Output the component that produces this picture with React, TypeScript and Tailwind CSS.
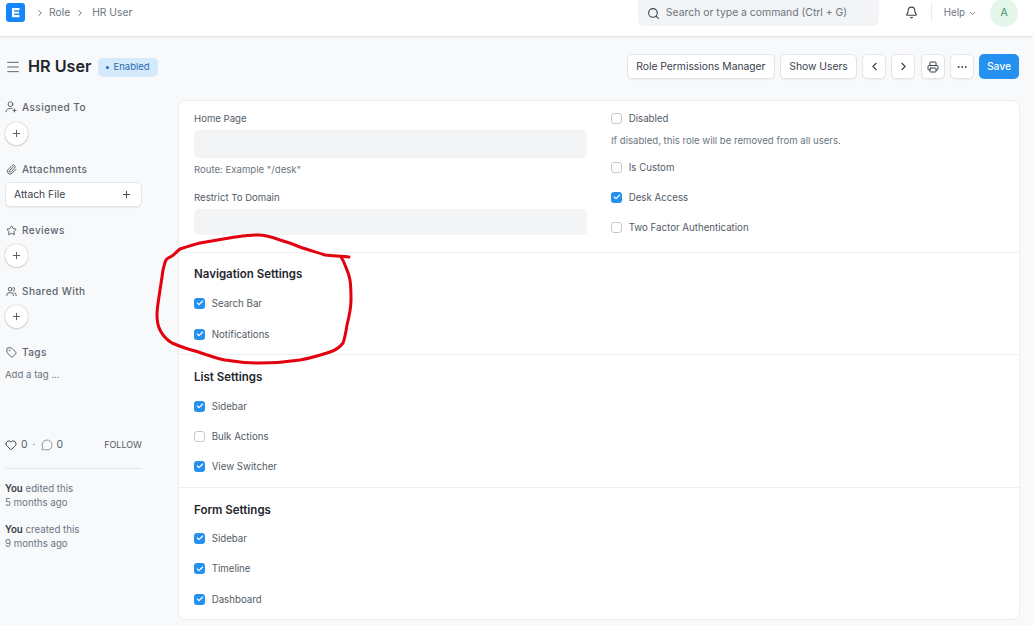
import React from "react";
import { Search, Bell, ChevronDown, ChevronLeft, ChevronRight, Printer, Ellipsis, Menu, Plus, Paperclip, Star, Users, Tag, Heart, MessageCircle, Check } from "lucide-react";

function Cb({ label, on }: { label: string; on?: boolean }) {
  return (
    <div className="flex items-center h-[14px] gap-[6.7px] text-[9.7px] text-[#525b66]">
      {on ? (
        <span className="w-[11px] h-[11px] -translate-y-px rounded-[3px] bg-[#2490ef] flex items-center justify-center">
          <Check size={8} color="#fff" strokeWidth={3.5} />
        </span>
      ) : (
        <span className="w-[11px] h-[11px] -translate-y-px rounded-[3px] border border-[#c4c9cf] bg-white" />
      )}
      <span>{label}</span>
    </div>
  );
}

function SideHead({ icon, label }: { icon: React.ReactNode; label: string }) {
  return (
    <div className="flex items-center h-[14px] gap-[5px] text-[10px] tracking-[0.45px] text-[#5c6570] font-medium">
      <span className="w-[12px] flex justify-center text-[#4c5560]">{icon}</span>
      {label}
    </div>
  );
}

function Round() {
  return (
    <div className="w-[23px] h-[23px] rounded-full bg-white shadow-[0_0_1px_rgba(0,0,0,.35),0_1px_2px_rgba(0,0,0,.15)] flex items-center justify-center text-[#4c5560]">
      <Plus size={11} />
    </div>
  );
}

function Btn({ children, w }: { children: React.ReactNode; w?: string }) {
  return (
    <div className={`h-[25px] rounded-[5px] bg-white border border-[#e3e6e9] shadow-[0_1px_1px_rgba(0,0,0,.05)] flex items-center justify-center text-[10.3px] text-[#39414b] ${w ?? ""}`}>
      {children}
    </div>
  );
}

function AssignIcon() {
  return (
    <svg width="12" height="12" viewBox="0 0 12 12" fill="none" stroke="currentColor" strokeWidth="0.9" strokeLinecap="round">
      <circle cx="5.5" cy="3.2" r="2.4" />
      <path d="M1 10.8C1 8.6 2.8 7.4 5.5 7.4C6.2 7.4 6.8 7.5 7.3 7.6" />
      <path d="M9.5 8V11M8 9.5H11" />
    </svg>
  );
}

export default function App() {
  return (
    <div className="relative w-[1033px] h-[625px] overflow-hidden bg-[#f8f9fa] font-['Inter',sans-serif]">
      <header className="h-[36px] bg-white shadow-[0_1px_2px_rgba(0,0,0,.12)] flex items-start pl-[6px] pr-[15px]">
        <div className="mt-[3px] w-[19px] h-[19px] rounded-[3px] bg-[#1587fa]">
          <svg width="19" height="19" viewBox="0 0 19 19" fill="#fff">
            <rect x="6" y="5" width="7.5" height="2.2" />
            <rect x="6" y="5" width="2.2" height="9" />
            <rect x="6" y="8.6" width="7" height="2" />
            <rect x="6" y="12" width="7.5" height="2.2" />
          </svg>
        </div>
        <div className="flex items-center h-[25px] ml-[10px] text-[10.3px] text-[#6b7480] whitespace-nowrap">
          <ChevronRight size={10} className="text-[#4c5560]" />
          <span className="ml-[4px]">Role</span>
          <ChevronRight size={10} className="ml-[5px] text-[#4c5560]" />
          <span className="ml-[7px]">HR User</span>
        </div>
        <div className="ml-auto w-[241px] h-[26px] rounded-b-[5px] bg-[#f3f4f6] flex items-center pl-[9px] gap-[6px] text-[10.4px] text-[#6b7480] whitespace-nowrap">
          <Search size={13} className="text-[#39414b]" />
          <span>Search or type a command (Ctrl + G)</span>
        </div>
        <div className="flex items-center h-[25px] ml-[26px]">
          <Bell size={13} className="text-[#39414b]" />
          <div className="w-px h-[19px] bg-[#e8eaed] ml-[13px]" />
          <span className="ml-[12px] mt-[1px] text-[9.7px] text-[#6b7480]">Help</span>
          <ChevronDown size={9} className="ml-[3px] mt-[1px] text-[#4c5560]" />
          <div className="ml-[13px] w-[28px] h-[28px] rounded-full bg-[#e4f5e9] flex items-center justify-center text-[10.5px] text-[#3c9a5f]">A</div>
        </div>
      </header>

      <div className="flex items-center h-[25px] mt-[18px] pl-[5px] pr-[14px]">
        <Menu size={16} strokeWidth={1.5} className="text-[#5c6570]" />
        <h1 className="ml-[7px] text-[16.2px] leading-none font-semibold text-[#1f272e] whitespace-nowrap">HR User</h1>
        <div className="ml-[6px] mt-[2px] h-[19px] px-[8px] rounded-[5px] bg-[#d3e9fc] flex items-center gap-[5px] text-[9.5px] text-[#2b6cb0]">
          <span className="w-[3px] h-[3px] rounded-full bg-[#2b6cb0]" />
          Enabled
        </div>
        <div className="ml-auto flex items-center gap-[5.2px]">
          <Btn w="w-[148px]">Role Permissions Manager</Btn>
          <Btn w="w-[77px]">Show Users</Btn>
          <Btn w="w-[24px]"><ChevronLeft size={13} /></Btn>
          <Btn w="w-[24px]"><ChevronRight size={13} /></Btn>
          <Btn w="w-[24px]"><Printer size={12} /></Btn>
          <Btn w="w-[24px]"><Ellipsis size={12} /></Btn>
          <div className="h-[25px] w-[40px] rounded-[5px] bg-[#2490ef] flex items-center justify-center text-[10.3px] font-medium text-white">Save</div>
        </div>
      </div>

      <div className="flex mt-[21px]">
        <aside className="w-[178px] shrink-0 pl-[5px] pr-[36px]">
          <SideHead icon={<AssignIcon />} label="Assigned To" />
          <div className="mt-[8px]"><Round /></div>
          <div className="mt-[17px]"><SideHead icon={<Paperclip size={11} />} label="Attachments" /></div>
          <div className="mt-[6px] h-[25px] rounded-[5px] bg-white border border-[#e3e6e9] shadow-[0_1px_1px_rgba(0,0,0,.06)] flex items-center justify-between pl-[8px] pr-[9px] text-[10.3px] text-[#39414b]">
            Attach File <Plus size={11} />
          </div>
          <div className="mt-[16px]"><SideHead icon={<Star size={11} />} label="Reviews" /></div>
          <div className="mt-[7px]"><Round /></div>
          <div className="mt-[17px]"><SideHead icon={<Users size={11} />} label="Shared With" /></div>
          <div className="mt-[7px]"><Round /></div>
          <div className="mt-[17px]"><SideHead icon={<Tag size={11} />} label="Tags" /></div>
          <div className="mt-[9px] text-[9.6px] leading-[14px] text-[#6b7480]">Add a tag ...</div>
          <div className="mt-[56px] flex items-center h-[14px] text-[10.3px] text-[#525b66]">
            <Heart size={12} className="text-[#39414b]" />
            <span className="ml-[4px]">0</span>
            <span className="ml-[5px]">·</span>
            <MessageCircle size={12} className="ml-[6px] text-[#8d96a1]" />
            <span className="ml-[3px]">0</span>
            <span className="ml-auto text-[9px] text-[#525b66]">FOLLOW</span>
          </div>
          <div className="mt-[16px] border-t border-[#e3e6e9]" />
          <div className="mt-[13px] text-[9.7px] leading-[14px] text-[#6b7480]">
            <div><b className="font-semibold text-[#39414b]">You</b> edited this</div>
            <div>5 months ago</div>
            <div className="mt-[13px]"><b className="font-semibold text-[#39414b]">You</b> created this</div>
            <div>9 months ago</div>
          </div>
        </aside>

        <main className="w-[842px] h-[520px] rounded-[7px] bg-white border border-[#eceef0] flex flex-col">
          <section className="h-[152px] shrink-0 border-b border-[#eef0f2] flex pl-[15px] pt-[11px]">
            <div className="w-[393px] text-[9.6px] text-[#525b66]">
              <div className="leading-[14px]">Home Page</div>
              <div className="mt-[4px] h-[28px] rounded-[5px] bg-[#f3f4f6]" />
              <div className="mt-[5px] leading-[14px] text-[#6b7480]">Route: Example "/desk"</div>
              <div className="mt-[14px] leading-[14px]">Restrict To Domain</div>
              <div className="mt-[4px] h-[26px] rounded-[5px] bg-[#f3f4f6]" />
            </div>
            <div className="ml-[24px]">
              <Cb label="Disabled" />
              <div className="mt-[8px] text-[9.6px] leading-[14px] text-[#6b7480]">If disabled, this role will be removed from all users.</div>
              <div className="mt-[13px]"><Cb label="Is Custom" /></div>
              <div className="mt-[16px]"><Cb label="Desk Access" on /></div>
              <div className="mt-[16.5px]"><Cb label="Two Factor Authentication" /></div>
            </div>
          </section>
          <section className="h-[102px] shrink-0 border-b border-[#eef0f2] pl-[15px] pt-[13px]">
            <h2 className="text-[11.5px] leading-[16px] font-semibold text-[#1f272e]">Navigation Settings</h2>
            <div className="mt-[15px] flex flex-col gap-[17px]">
              <Cb label="Search Bar" on />
              <Cb label="Notifications" on />
            </div>
          </section>
          <section className="h-[133px] shrink-0 border-b border-[#eef0f2] pl-[15px] pt-[14px]">
            <h2 className="text-[11.5px] leading-[16px] font-semibold text-[#1f272e]">List Settings</h2>
            <div className="mt-[15px] flex flex-col gap-[16px]">
              <Cb label="Sidebar" on />
              <Cb label="Bulk Actions" />
              <Cb label="View Switcher" on />
            </div>
          </section>
          <section className="flex-1 pl-[15px] pt-[14px]">
            <h2 className="text-[11.5px] leading-[16px] font-semibold text-[#1f272e]">Form Settings</h2>
            <div className="mt-[14px] flex flex-col gap-[16.5px]">
              <Cb label="Sidebar" on />
              <Cb label="Timeline" on />
              <Cb label="Dashboard" on />
            </div>
          </section>
        </main>
      </div>

      <svg className="absolute left-0 top-0 pointer-events-none" width="1033" height="625" viewBox="0 0 1033 625" fill="none">
        <path d="M349 257C342 256 334 256 325 255C316 252 308 250 300 247C293 244 287 242 280 240C272 237 265 235 258 235C250 235 243 236 235 237C223 239 212 241 200 243C192 245 186 247 180 249C176 252 175 254 172 256C169 258 167 258 166 260C164 264 164 267 163 270C162 277 161 284 160 290C159 298 157 307 157 315C157 321 158 326 160 330C163 336 167 340 172 343C179 346 187 349 195 351C205 354 215 358 225 360C237 362 248 363 260 363C274 363 287 362 300 360C311 358 321 355 330 352C336 350 340 347 343 343C345 338 346 331 347 325C349 317 351 308 351 300C351 293 351 286 350 280C349 274 347 270 345 265C344 262 343 260 341 257" stroke="#e3000f" strokeWidth="3" strokeLinecap="round" strokeLinejoin="round" />
      </svg>
    </div>
  );
}
